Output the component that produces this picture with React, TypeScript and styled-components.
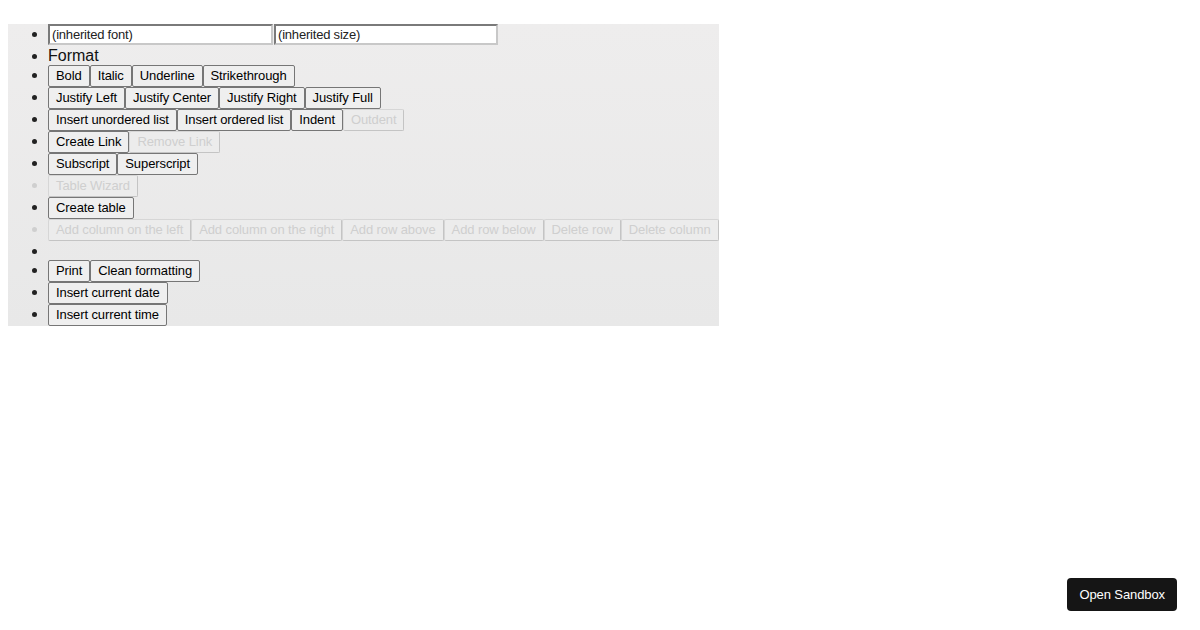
import styled, { createGlobalStyle } from "styled-components";

const GlobalStyle = createGlobalStyle`
  html, body {
    margin: 0;
    background: #ffffff;
  }
  body {
    padding: 24px 8px 8px;
    font-family: "Liberation Sans", Arial, sans-serif;
  }
`;

const Toolbar = styled.ul`
  display: inline-block;
  margin: 0;
  padding: 0 0 0 40px;

  background: linear-gradient(180deg, #eeeded 0%, #e8e8e8 100%);
  font-size: 16px;
  color: #222222;
`;

const Row = styled.li<{ muted?: boolean }>`
  white-space: nowrap;
  line-height: 19px;
  min-height: 19px;
  color: ${(props) => (props.muted ? "#cfcfcf" : "#222222")};
`;

const Field = styled.input`
  box-sizing: border-box;
  width: ${(props) => props.width}px;
  height: 21px;
  margin: 0 1px 1px 0;
  padding: 1px 2px;
  vertical-align: middle;

  font-family: inherit;
  font-size: 13px;
  letter-spacing: -0.2px;
  color: #222222;
  background: #ffffff;

  border: 2px solid;
  border-color: #7a7a7a #c8c8c8 #c8c8c8 #7a7a7a;
`;

const Label = styled.span`
  font-size: 16px;
  line-height: 19px;
  color: #111111;
`;

const Btn = styled.button`
  box-sizing: border-box;
  height: 22px;
  margin: 0;
  padding: 1px 7px;
  vertical-align: top;

  font-family: inherit;
  font-size: 13px;
  letter-spacing: -0.1px;
  line-height: 18px;
  color: #000000;

  background: #efefef;
  border: 1px solid #767676;
  border-radius: 2px;

  &:disabled {
    color: #cfcfcf;
    background: #ececec;
    border-color: #d6d6d6 #c4c4c4 #c4c4c4 #d6d6d6;
  }
`;

const SandboxBtn = styled.button`
  position: fixed;
  right: 23px;
  bottom: 19px;

  height: 33px;
  padding: 0 12px;

  font-family: "Liberation Sans", Arial, sans-serif;
  font-size: 13px;
  letter-spacing: -0.1px;
  color: #ffffff;

  background: #151515;
  border: none;
  border-radius: 4px;
`;

type Item = { label: string; off?: boolean };

const ROWS: Item[][] = [
  [{ label: "Bold" }, { label: "Italic" }, { label: "Underline" }, { label: "Strikethrough" }],
  [
    { label: "Justify Left" },
    { label: "Justify Center" },
    { label: "Justify Right" },
    { label: "Justify Full" },
  ],
  [
    { label: "Insert unordered list" },
    { label: "Insert ordered list" },
    { label: "Indent" },
    { label: "Outdent", off: true },
  ],
  [{ label: "Create Link" }, { label: "Remove Link", off: true }],
  [{ label: "Subscript" }, { label: "Superscript" }],
  [{ label: "Table Wizard", off: true }],
  [{ label: "Create table" }],
  [
    { label: "Add column on the left", off: true },
    { label: "Add column on the right", off: true },
    { label: "Add row above", off: true },
    { label: "Add row below", off: true },
    { label: "Delete row", off: true },
    { label: "Delete column", off: true },
  ],
  [],
  [{ label: "Print" }, { label: "Clean formatting" }],
  [{ label: "Insert current date" }],
  [{ label: "Insert current time" }],
];

const App = () => {
  return (
    <>
      <GlobalStyle />
      <Toolbar>
        <Row>
          <Field width={225} defaultValue="(inherited font)" readOnly />
          <Field width={224} defaultValue="(inherited size)" readOnly />
        </Row>
        <Row>
          <Label>Format</Label>
        </Row>
        {ROWS.map((row, idx) => (
          <Row key={idx} muted={row.length > 0 && row.every((item) => item.off)}>
            {row.map((item) => (
              <Btn key={item.label} disabled={item.off}>
                {item.label}
              </Btn>
            ))}
          </Row>
        ))}
      </Toolbar>
      <SandboxBtn>Open Sandbox</SandboxBtn>
    </>
  );
};

export default App;
